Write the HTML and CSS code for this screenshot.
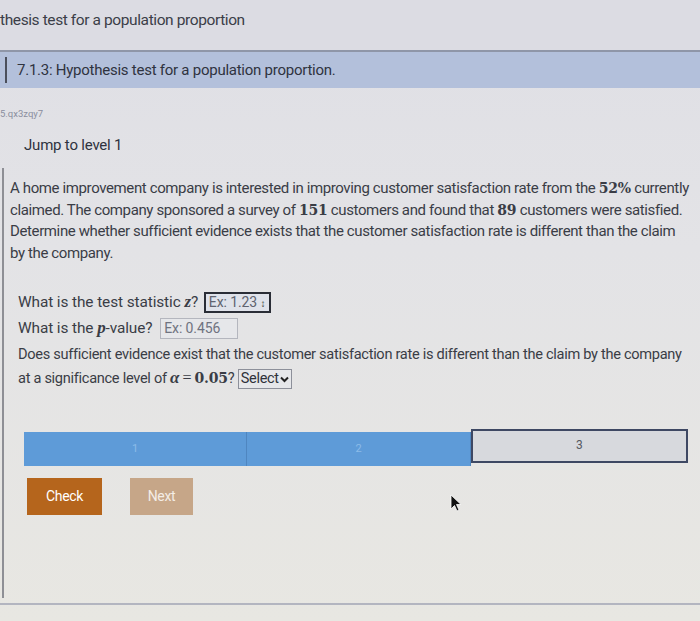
FILE: index.html
```html
<!DOCTYPE html>
<html>
<head>
<meta charset="utf-8">
<link rel="stylesheet" href="styles.css">
</head>
<body>
<div class="page">
  <header class="topbar">thesis test for a population proportion</header>
  <div class="band"><span class="band-text">7.1.3: Hypothesis test for a population proportion.</span></div>
  <div class="code">5.qx3zqy7</div>
  <div class="jump">Jump to level 1</div>
  <div class="content">
    <p class="problem">A home improvement company is interested in improving customer satisfaction rate from the <span class="m">52%</span> currently claimed. The company sponsored a survey of <span class="m">151</span> customers and found that <span class="m">89</span> customers were satisfied. Determine whether sufficient evidence exists that the customer satisfaction rate is different than the claim by the company.</p>
    <div class="questions">
      <div class="q q1">What is the test statistic <span class="mi">z</span>? <span class="input focused">Ex: 1.23 <span class="spin">&#x2195;</span></span></div>
      <div class="q q2">What is the <span class="mi">p</span>-value? <span class="input">Ex: 0.456</span></div>
      <div class="q q3">Does sufficient evidence exist that the customer satisfaction rate is different than the claim by the company<br>at a significance level of <span class="mi">&#945;</span> <span class="mo">=</span> <span class="m">0.05</span>? <span class="select">Select<svg class="chev" width="9" height="7" viewBox="0 0 9 7"><path d="M1 1.5 L4.5 5 L8 1.5" fill="none" stroke="#222" stroke-width="2"/></svg></span></div>
    </div>
    <div class="progress">
      <div class="seg done">1</div>
      <div class="seg done">2</div>
      <div class="seg current">3</div>
    </div>
    <div class="buttons">
      <div class="btn check">Check</div>
      <div class="btn next">Next</div>
      <svg class="cursor" width="12" height="18" viewBox="0 0 12 18"><path d="M1 1 L1 15 L4.5 11.5 L7 17 L9 16 L6.5 10.5 L11 10.5 Z" fill="#111" stroke="#fff" stroke-width="0.8"/></svg>
    </div>
  </div>
  <div class="bottomline"></div>
</div>
</body>
</html>
```
FILE: styles.css
```css
html, body {
  margin: 0;
  padding: 0;
}
body {
  width: 700px;
  height: 621px;
  overflow: hidden;
  background: linear-gradient(180deg, #dfdfe5 0%, #e3e3e6 40%, #e8e7e2 100%);
  font-family: Roboto, "Liberation Sans", sans-serif;
  color: #3a3d45;
}
.page {
  position: relative;
  height: 621px;
}
.topbar {
  height: 50px;
  box-sizing: border-box;
  padding-top: 11px;
  font-size: 15.5px;
  letter-spacing: -0.4px;
  color: #3b3e48;
  background: #dcdce3;
  white-space: nowrap;
}
.band {
  height: 38px;
  box-sizing: border-box;
  background: #b3c0db;
  border-top: 2px solid #8f96a8;
  display: flex;
  align-items: center;
  padding-left: 5px;
}
.band-text {
  border-left: 2px solid #4b4f5c;
  padding-left: 10px;
  height: 26px;
  line-height: 26px;
  font-size: 15px;
  letter-spacing: -0.25px;
  color: #2f3340;
}
.code {
  margin-top: 20px;
  font-size: 9.5px;
  color: #8a8e9e;
  height: 14px;
  white-space: nowrap;
}
.jump {
  margin-top: 14px;
  padding-left: 24px;
  font-size: 15px;
  letter-spacing: -0.2px;
  color: #2f3340;
}
.content {
  margin-top: 14px;
  margin-left: 2px;
  border-left: 2px solid #8e8f95;
  padding-left: 6px;
  height: 430px;
  box-sizing: border-box;
  padding-top: 10px;
}
.problem {
  margin: 0;
  width: 680px;
  font-size: 15px;
  line-height: 21.5px;
  letter-spacing: -0.38px;
  color: #3a3d46;
}
.m {
  font-family: "DejaVu Serif", "Liberation Serif", serif;
  font-weight: bold;
  font-size: 14px;
  line-height: 1;
  letter-spacing: -0.2px;
}
.mi {
  font-family: "Liberation Serif", serif;
  font-style: italic;
  font-weight: bold;
  font-size: 17px;
  line-height: 1;
}
.mo {
  font-family: "Liberation Serif", serif;
  font-size: 16px;
  line-height: 1;
}
.questions {
  margin-top: 27px;
  padding-left: 8px;
  font-size: 14.6px;
  letter-spacing: -0.3px;
  color: #3a3d46;
}
.q1, .q2 {
  font-size: 15.4px;
  letter-spacing: -0.1px;
}
.q1 {
  line-height: 22px;
  height: 26px;
}
.q2 {
  line-height: 22px;
  height: 25px;
}
.q3 {
  line-height: 24px;
}
.input {
  display: inline-block;
  box-sizing: border-box;
  height: 21px;
  line-height: 18px;
  padding: 0 3px;
  border: 1px solid #b4b6be;
  background: #e6e7ea;
  color: #6f7380;
  font-size: 14px;
  width: 78px;
  vertical-align: middle;
  margin-left: 4px;
}
.input.focused {
  border: 2px solid #2a2d36;
  width: 67px;
  color: #60636f;
  background: #dfe2ea;
  line-height: 17px;
  margin-left: 2px;
}
.spin {
  font-size: 10px;
  color: #333;
}
.select {
  display: inline-flex;
  align-items: center;
  gap: 1px;
  box-sizing: border-box;
  height: 20px;
  padding: 0 2px;
  border: 1px solid #8d909a;
  background: #e6e7ea;
  color: #2f323b;
  font-size: 14.5px;
  vertical-align: middle;
}
.chev {
  margin-top: 1px;
}
.progress {
  margin-top: 40px;
  margin-left: 14px;
  width: 664px;
  display: flex;
  align-items: flex-start;
}
.seg {
  height: 34px;
  box-sizing: border-box;
  font-size: 11px;
  text-align: center;
  line-height: 34px;
}
.seg.done {
  width: 224px;
  background: #5e9bd8;
  color: #8cbbe8;
  border-right: 1px solid #4f86c0;
  margin-top: 2px;
}
.seg.current {
  width: 218px;
  height: 34px;
  margin-top: -1px;
  background: #d7d9dd;
  border: 2px solid #3e4863;
  color: #555962;
  line-height: 28px;
  font-size: 12px;
}
.buttons {
  margin-top: 12px;
  margin-left: 17px;
  display: flex;
  align-items: center;
  gap: 28px;
  position: relative;
}
.btn {
  box-sizing: border-box;
  height: 37px;
  line-height: 37px;
  text-align: center;
  font-size: 14px;
  color: #fff;
  letter-spacing: -0.3px;
}
.btn.check {
  width: 75px;
  background: #b5651c;
}
.btn.next {
  width: 63px;
  background: #c6a688;
  color: #f4ede6;
}
.cursor {
  position: absolute;
  left: 423px;
  top: 16px;
}
.bottomline {
  position: absolute;
  left: 0;
  top: 603px;
  width: 700px;
  height: 2px;
  background: #b3b5c0;
}
```
